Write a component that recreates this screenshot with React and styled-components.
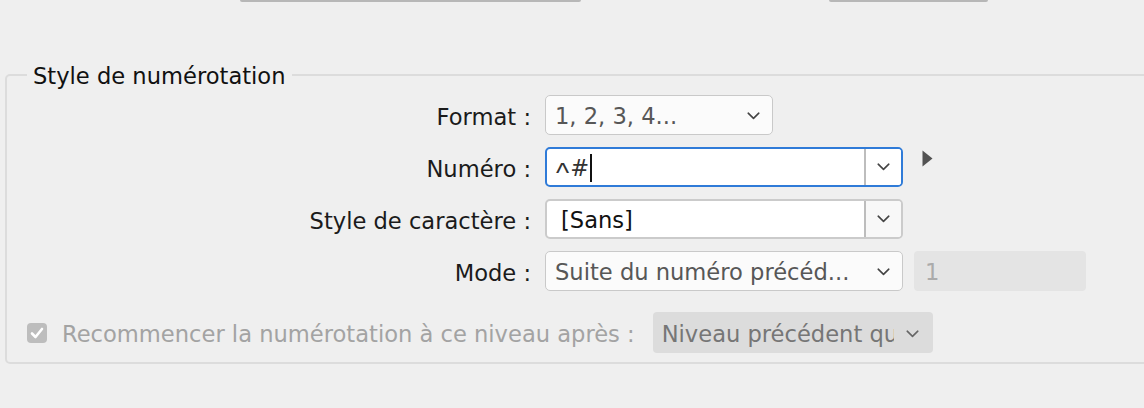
import React from "react";
import styled, { createGlobalStyle } from "styled-components";

const GlobalStyle = createGlobalStyle`
  html, body {
    margin: 0;
    padding: 0;
    background: #efefef;
    overflow: hidden;
  }
  body {
    font-family: "DejaVu Sans", "Liberation Sans", sans-serif;
  }
`;

const FONT = "22.6px";

const Page = styled.div`
  width: 1144px;
  height: 408px;
  overflow: hidden;
  background: #efefef;
`;

/* bottoms of the controls sitting above this panel */
const TopStrip = styled.div`
  display: flex;
  height: 3px;
  padding-left: 240px;
  gap: 248px;
`;

const Stub = styled.div`
  width: ${(p) => p.$w}px;
  height: 2px;
  background: #b7b7b7;
  border-radius: 0 0 4px 4px;
`;

const Group = styled.fieldset`
  margin: 59px -20px 0 5px;
  padding: 7px 0 9px 0;
  border: 2px solid #dcdcdc;
  border-radius: 5px;
  min-width: 0;
`;

const Legend = styled.legend`
  margin-left: 20px;
  padding: 2px 6px 0;
  font-size: ${FONT};
  line-height: 24px;
  color: #111;
`;

const FormGrid = styled.div`
  display: grid;
  grid-template-columns: 524px auto;
  column-gap: 14px;
  row-gap: 12px;
  align-items: center;
`;

const Label = styled.div`
  text-align: right;
  font-size: ${FONT};
  line-height: 40px;
  padding-top: 2px;
  height: 40px;
  box-sizing: border-box;
  color: #1b1b1b;
  white-space: nowrap;
`;

const FieldLine = styled.div`
  display: flex;
  align-items: center;
  gap: ${(p) => p.$gap ?? 11}px;
`;

const Select = styled.div`
  box-sizing: border-box;
  display: flex;
  align-items: center;
  width: ${(p) => p.$w}px;
  height: 40px;
  padding: 2px 12px 0 9px;
  background: #fbfbfb;
  border: 1.5px solid #c9c9c9;
  border-radius: 5px;
  font-size: ${FONT};
  color: #575757;
`;

const SelectText = styled.span`
  flex: 1;
  min-width: 0;
  white-space: nowrap;
  overflow: hidden;
  margin-right: ${(p) => p.$gapRight ?? 4}px;
`;

const Combo = styled.div`
  box-sizing: border-box;
  display: flex;
  width: 358px;
  height: 40px;
  background: #fff;
  border: ${(p) => (p.$focused ? "2px solid #2f7bd8" : "2px solid #cbcbcb")};
  border-radius: 5px;
  overflow: hidden;
`;

const ComboInput = styled.div`
  flex: 1;
  display: flex;
  align-items: center;
  padding-left: ${(p) => p.$pad ?? 8}px;
  padding-top: 2px;
  font-size: ${FONT};
  line-height: 34px;
  color: ${(p) => p.$color || "#333"};
  white-space: nowrap;
`;

/* the caret of the metacharacter is drawn from a face with a tall, narrow ^ */
const Meta = styled.span`
  font-family: "Liberation Sans", sans-serif;
  font-size: 28px;
  line-height: 24px;
  height: 24px;
  margin-top: 10px;
  margin-right: 1px;
`;

const Caret = styled.span`
  display: inline-block;
  width: 2px;
  height: 28px;
  background: #111;
  margin-left: 1px;
`;

const ComboButton = styled.div`
  width: 35px;
  display: flex;
  align-items: center;
  justify-content: center;
  border-left: 2px solid #bdbdbd;
  background: ${(p) => p.$bg || "#fff"};
`;

const NumberBox = styled.div`
  box-sizing: border-box;
  width: 172px;
  height: 40px;
  display: flex;
  align-items: center;
  padding: 2px 0 0 11px;
  background: #e4e4e4;
  border-radius: 4px;
  font-size: ${FONT};
  color: #ababab;
`;

const ArrowButton = styled.div`
  display: flex;
  align-self: flex-start;
  margin: 3px 0 0 19px;
`;

const CheckRow = styled.div`
  display: flex;
  align-items: center;
  margin-top: 21px;
  padding-left: 20px;
  height: 41px;
`;

const CheckBox = styled.div`
  flex-shrink: 0;
  width: 20px;
  height: 20px;
  border-radius: 4px;
  background: #bdbdbd;
  display: flex;
  align-items: center;
  justify-content: center;
  margin-right: 15px;
`;

const CheckText = styled.span`
  font-size: ${FONT};
  padding-top: 2px;
  color: #a3a3a3;
  white-space: nowrap;
  margin-right: 18px;
`;

const DimSelect = styled.div`
  box-sizing: border-box;
  flex-shrink: 0;
  width: 280px;
  height: 41px;
  display: flex;
  align-items: center;
  padding: 2px 14px 0 9px;
  background: #dcdcdc;
  border-radius: 4px;
  font-size: ${FONT};
  color: #767676;
`;

const Chevron = ({ color = "#444" }) => (
  <svg width="13" height="8" viewBox="0 0 13 8" style={{ flexShrink: 0 }}>
    <path d="M1.2 1.2 L6.5 6.3 L11.8 1.2" fill="none" stroke={color} strokeWidth="1.6" strokeLinecap="round" strokeLinejoin="round" />
  </svg>
);

const Check = () => (
  <svg width="14" height="12" viewBox="0 0 14 12">
    <path d="M2 6.5 L5.5 10 L12 2" fill="none" stroke="#fff" strokeWidth="2.6" strokeLinecap="round" strokeLinejoin="round" />
  </svg>
);

const Triangle = () => (
  <svg width="11" height="17" viewBox="0 0 11 17">
    <path d="M0.5 0.5 L10.5 8.5 L0.5 16.5 Z" fill="#525252" />
  </svg>
);

export default function App() {
  return (
    <Page>
      <GlobalStyle />
      <TopStrip>
        <Stub $w={341} />
        <Stub $w={159} />
      </TopStrip>
      <Group>
        <Legend>Style de numérotation</Legend>
        <FormGrid>
          <Label>Format :</Label>
          <FieldLine>
            <Select $w={228}>
              <SelectText>1, 2, 3, 4...</SelectText>
              <Chevron />
            </Select>
          </FieldLine>

          <Label>Numéro :</Label>
          <FieldLine $gap={0}>
            <Combo $focused>
              <ComboInput $pad={9}>
                <Meta>^</Meta>#
                <Caret />
              </ComboInput>
              <ComboButton>
                <Chevron />
              </ComboButton>
            </Combo>
            <ArrowButton>
              <Triangle />
            </ArrowButton>
          </FieldLine>

          <Label>Style de caractère :</Label>
          <FieldLine>
            <Combo>
              <ComboInput $pad={14} $color="#111">[Sans]</ComboInput>
              <ComboButton $bg="#f8f8f8">
                <Chevron />
              </ComboButton>
            </Combo>
          </FieldLine>

          <Label>Mode :</Label>
          <FieldLine>
            <Select $w={358}>
              <SelectText>Suite du numéro précéd...</SelectText>
              <Chevron />
            </Select>
            <NumberBox>1</NumberBox>
          </FieldLine>
        </FormGrid>

        <CheckRow>
          <CheckBox>
            <Check />
          </CheckBox>
          <CheckText>Recommencer la numérotation à ce niveau après :</CheckText>
          <DimSelect>
            <SelectText $gapRight={12}>Niveau précédent qu</SelectText>
            <Chevron color="#666" />
          </DimSelect>
        </CheckRow>
      </Group>
    </Page>
  );
}
